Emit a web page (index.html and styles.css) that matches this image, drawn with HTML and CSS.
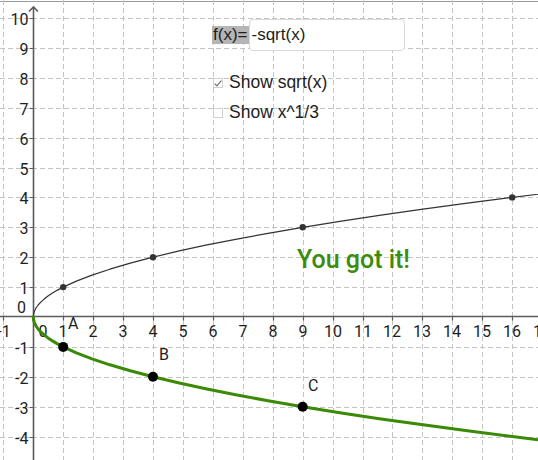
FILE: index.html
```html
<!DOCTYPE html>
<html>
<head>
<meta charset="utf-8">
<link rel="stylesheet" href="styles.css">
</head>
<body>
<div class="applet">
  <svg class="graph" width="538" height="460" viewBox="0 0 538 460">
    <line class="frame" x1="0" y1="1.5" x2="538" y2="1.5"/>
    <path class="grid" d="M3.5 0V460 M63.5 0V460 M93.5 0V460 M123.5 0V460 M153.5 0V460 M183.5 0V460 M213.5 0V460 M243.5 0V460 M273.5 0V460 M303.5 0V460 M333.5 0V460 M363.5 0V460 M392.5 0V460 M422.5 0V460 M452.5 0V460 M482.5 0V460 M512.5 0V460
      M0 18.5H538 M0 48.5H538 M0 78.5H538 M0 108.5H538 M0 138.5H538 M0 168.5H538 M0 197.5H538 M0 227.5H538 M0 257.5H538 M0 287.5H538 M0 347.5H538 M0 377.5H538 M0 407.5H538 M0 437.5H538"/>
    <path class="axis" d="M0 316.5H538 M33.5 7V460 M29 11.5L33.5 7L38 11.5"/>
    <path class="ticks" d="M3.5 316.5v4 M63.5 316.5v4 M93.5 316.5v4 M123.5 316.5v4 M153.5 316.5v4 M183.5 316.5v4 M213.5 316.5v4 M243.5 316.5v4 M273.5 316.5v4 M303.5 316.5v4 M333.5 316.5v4 M363.5 316.5v4 M392.5 316.5v4 M422.5 316.5v4 M452.5 316.5v4 M482.5 316.5v4 M512.5 316.5v4
      M29.5 18.5h4 M29.5 48.5h4 M29.5 78.5h4 M29.5 108.5h4 M29.5 138.5h4 M29.5 168.5h4 M29.5 197.5h4 M29.5 227.5h4 M29.5 257.5h4 M29.5 287.5h4 M29.5 347.5h4 M29.5 377.5h4 M29.5 407.5h4 M29.5 437.5h4"/>

    <g class="xlabels">
      <text x="4" y="336.5">-1</text>
      <text x="43" y="336.5">0</text>
      <text x="63" y="336.5">1</text>
      <text x="93" y="336.5">2</text>
      <text x="123" y="336.5">3</text>
      <text x="153" y="336.5">4</text>
      <text x="183" y="336.5">5</text>
      <text x="213" y="336.5">6</text>
      <text x="243" y="336.5">7</text>
      <text x="273" y="336.5">8</text>
      <text x="303" y="336.5">9</text>
      <text x="333" y="336.5">10</text>
      <text x="363" y="336.5">11</text>
      <text x="392" y="336.5">12</text>
      <text x="422" y="336.5">13</text>
      <text x="452" y="336.5">14</text>
      <text x="482" y="336.5">15</text>
      <text x="512" y="336.5">16</text>
      <text x="542" y="336.5">17</text>
    </g>
    <g class="ylabels">
      <text x="28.5" y="24.5">10</text>
      <text x="28.5" y="54.5">9</text>
      <text x="28.5" y="84.5">8</text>
      <text x="28.5" y="114.5">7</text>
      <text x="28.5" y="144.5">6</text>
      <text x="28.5" y="174.5">5</text>
      <text x="28.5" y="203.5">4</text>
      <text x="28.5" y="233.5">3</text>
      <text x="28.5" y="263.5">2</text>
      <text x="28.5" y="293.5">1</text>
      <text x="26" y="312.5">0</text>
      <text x="28.5" y="353.5">-1</text>
      <text x="28.5" y="383.5">-2</text>
      <text x="28.5" y="413.5">-3</text>
      <text x="28.5" y="443.5">-4</text>
    </g>

    <polyline class="sqrt" points="33.3,317 33.6,314 34.5,311 36,308 38.1,305 40.8,302.1 44.1,299.1 48,296.1 52.5,293.1 57.5,290.1 63.2,287.1 76.4,281.1 92,275.1 109.9,269.2 130.3,263.2 153,257.2 178.2,251.2 205.7,245.2 235.6,239.3 268,233.3 302.7,227.3 339.8,221.3 379.3,215.3 421.2,209.4 465.5,203.4 512.2,197.4 561.3,191.4"/>
    <circle class="dot" cx="63.2" cy="287.1" r="3.2"/>
    <circle class="dot" cx="153" cy="257.2" r="3.2"/>
    <circle class="dot" cx="302.7" cy="227.3" r="3.2"/>
    <circle class="dot" cx="512.2" cy="197.4" r="3.2"/>

    <polyline class="negsqrt" points="33.3,317 33.6,320 34.5,323 36,326 38.1,329 40.8,332 44.1,334.9 48,337.9 52.5,340.9 57.5,343.9 63.2,346.9 76.4,352.9 92,358.9 109.9,364.8 130.3,370.8 153,376.8 178.2,382.8 205.7,388.8 235.6,394.7 268,400.7 302.7,406.7 339.8,412.7 379.3,418.7 421.2,424.6 465.5,430.6 512.2,436.6 561.3,442.6"/>
    <circle class="pt" cx="63.2" cy="346.9" r="5"/>
    <circle class="pt" cx="153" cy="376.8" r="5"/>
    <circle class="pt" cx="302.7" cy="406.7" r="5"/>
    <g class="ptlabels">
      <text x="68" y="329">A</text>
      <text x="159" y="360">B</text>
      <text x="308" y="391">C</text>
    </g>

    <text class="success" x="297" y="267.5">You got it!</text>
  </svg>

  <div class="inputrow">
    <span class="fxlabel">f(x)=</span>
    <div class="inputbox">-sqrt(x)</div>
  </div>

  <div class="checks">
    <label class="check">
      <span class="box">
        <svg width="10" height="10" viewBox="0 0 10 10"><path d="M1.8 5.6L3.9 7.8L8.4 2.6"/></svg>
      </span>
      <span>Show sqrt(x)</span>
    </label>
    <label class="check">
      <span class="box"></span>
      <span>Show x^1/3</span>
    </label>
  </div>
</div>
</body>
</html>
```

FILE: styles.css
```css
html, body {
  margin: 0;
  padding: 0;
  background: #ffffff;
}

.applet {
  position: relative;
  width: 538px;
  height: 460px;
  overflow: hidden;
  background: #ffffff;
  font-family: "Liberation Sans", Arial, sans-serif;
}

.graph {
  position: absolute;
  left: 0;
  top: 0;
  display: block;
}

.frame {
  stroke: #9a9a9a;
  stroke-width: 1;
}

.grid {
  fill: none;
  stroke: #c4c4c4;
  stroke-width: 1;
  stroke-dasharray: 5 3;
}

.axis {
  fill: none;
  stroke: #5c5c5c;
  stroke-width: 1.6;
}

.ticks {
  fill: none;
  stroke: #5c5c5c;
  stroke-width: 1.2;
}

.xlabels text,
.ylabels text,
.ptlabels text {
  font-family: Roboto, "Liberation Sans", sans-serif;
  font-size: 16px;
  fill: #1e1e1e;
}

.xlabels text {
  text-anchor: middle;
}

.ylabels text {
  text-anchor: end;
}

.ptlabels text {
  font-size: 16px;
}

.sqrt {
  fill: none;
  stroke: #333333;
  stroke-width: 1.2;
  stroke-linejoin: round;
}

.dot {
  fill: #333333;
}

.negsqrt {
  fill: none;
  stroke: #3a8a06;
  stroke-width: 3;
  stroke-linejoin: round;
  stroke-linecap: round;
}

.pt {
  fill: #000000;
}

.success {
  font-family: Roboto, "Liberation Sans", sans-serif;
  font-size: 25px;
  font-weight: 500;
  fill: #3c8c0c;
}

.inputrow {
  position: absolute;
  left: 212px;
  top: 19px;
  height: 32px;
  display: flex;
  align-items: center;
  font-size: 17px;
  color: #1e1e1e;
}

.fxlabel {
  background: #b5b5b5;
  line-height: 18px;
  padding: 0 2px 0 1px;
}

.inputbox {
  box-sizing: border-box;
  width: 156px;
  height: 32px;
  border: 1px solid #d9d9d9;
  border-radius: 4px;
  background: #ffffff;
  padding-left: 1px;
  display: flex;
  align-items: center;
}

.checks {
  position: absolute;
  left: 213px;
  top: 72px;
  display: flex;
  flex-direction: column;
  gap: 10px;
  font-size: 17.5px;
  color: #1e1e1e;
}

.check {
  display: flex;
  align-items: center;
  gap: 6px;
  height: 20px;
}

.box {
  box-sizing: border-box;
  width: 10px;
  height: 10px;
  margin-top: 2px;
  border: 1px solid #d0d0d0;
  display: flex;
}

.box svg {
  margin: -1px;
  overflow: visible;
}

.box path {
  fill: none;
  stroke: #707070;
  stroke-width: 1.2;
}
```
